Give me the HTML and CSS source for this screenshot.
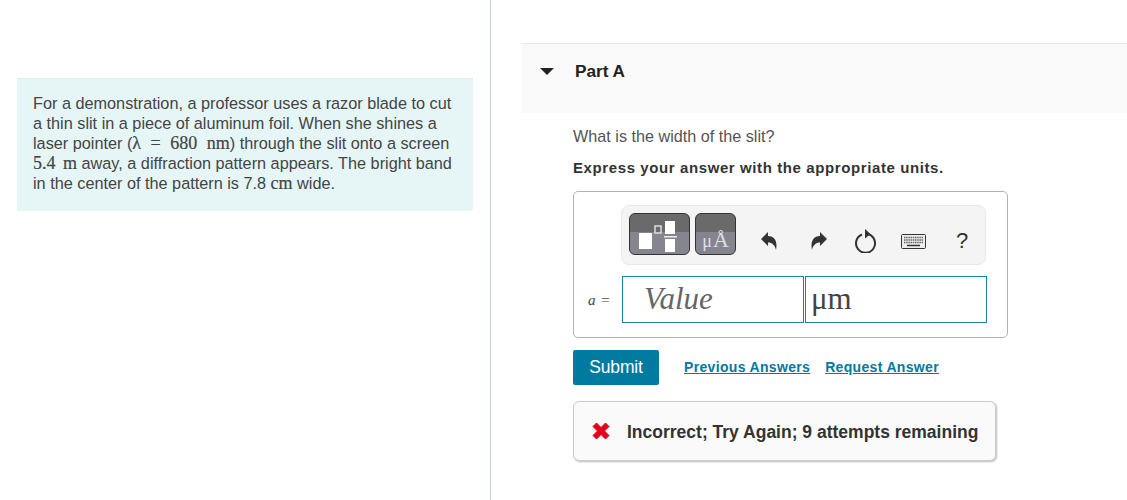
FILE: index.html
```html
<!DOCTYPE html>
<html lang="en">

<head>
    <meta charset="UTF-8">
    <title>Part A</title>
    <link rel="stylesheet" href="styles.css">
</head>

<body>
    <div class="page">
        <div class="left-col">
            <div class="intro">
                For a demonstration, a professor uses a razor blade to cut
                a thin slit in a piece of aluminum foil. When she shines a
                laser pointer (<span class="math math-wide">&lambda; = 680 nm</span>) through the slit onto a screen
                <span class="math">5.4 m</span> away, a diffraction pattern appears. The bright band
                in the center of the pattern is 7.8 <span class="math">cm</span> wide.
            </div>
        </div>

        <div class="right-col">
            <div class="part-head">
                <span class="caret"></span>
                <span class="part-title">Part A</span>
            </div>

            <div class="part-body">
                <p class="question">What is the width of the slit?</p>
                <p class="instruction">Express your answer with the appropriate units.</p>

                <div class="answer-box">
                    <div class="toolbar">
                        <div class="tool-btn tool-templates">
                            <svg width="59" height="40" viewBox="0 0 59 40">
                                <rect x="9" y="19" width="13" height="16" fill="#fff"/>
                                <rect x="25" y="12" width="6" height="7" fill="none" stroke="#ddd" stroke-width="1.5"/>
                                <rect x="35" y="7" width="10" height="13" fill="#fff"/>
                                <rect x="34" y="22" width="13" height="1.5" fill="#eee"/>
                                <rect x="35" y="25" width="10" height="13" fill="#fff"/>
                            </svg>
                        </div>
                        <div class="tool-btn tool-units"><span class="mu">&mu;</span><span class="angstrom">&Aring;</span></div>
                        <div class="tool-icons">
                            <svg class="icon-undo" width="18" height="18" viewBox="0 0 18 18"><path d="M1 7 8 0V4C13.500 4 18 8 16 18 15 13 12 10.500 8 10.500V14z" fill="#333"/></svg>
                            <svg class="icon-redo" width="18" height="18" viewBox="0 0 18 18"><path d="M17 7 10 0V4C4.500 4 0 8 2 18 3 13 6 10.500 10 10.500V14z" fill="#333"/></svg>
                            <svg class="icon-reload" width="22" height="24" viewBox="0 0 22 24"><path d="M7 5.500a9.500 9.500 0 1 0 6.500-.2" fill="none" stroke="#333" stroke-width="2"/><path d="M10 0v9.500L15.500 5z" fill="#333"/></svg>
                            <svg class="icon-keyboard" width="25" height="15" viewBox="0 0 25 15"><rect x="0.500" y="0.500" width="24" height="14" rx="1" fill="#eee" stroke="#333"/><path d="M3 3.500h19M3 6h19M3 8.500h19" stroke="#666" stroke-width="1.500" stroke-dasharray="1.500 .7"/><path d="M6 11.500h13" stroke="#333" stroke-width="1.500"/></svg>
                            <span class="help">?</span>
                        </div>
                    </div>

                    <div class="answer-row">
                        <span class="var-label"><i>a</i> =</span>
                        <div class="field field-value">Value</div>
                        <div class="field field-units">&mu;m</div>
                    </div>
                </div>

                <div class="actions">
                    <button class="submit">Submit</button>
                    <a href="#" class="link">Previous Answers</a>
                    <a href="#" class="link">Request Answer</a>
                </div>

                <div class="feedback">
                    <svg width="18" height="18" viewBox="0 0 18 18"><path d="M1 4.500 4.500 1 9 5.500 13.500 1 17 4.500 12.500 9 17 13.500 13.500 17 9 12.500 4.500 17 1 13.500 5.500 9z" fill="#e2001a" stroke="#e2001a" stroke-linejoin="round"/></svg>
                    <span>Incorrect; Try Again; 9 attempts remaining</span>
                </div>
            </div>
        </div>
    </div>
</body>

</html>
```

FILE: styles.css
```css
body {
    font-family: "Liberation Sans", Arial, sans-serif;
    margin: 0;
    padding: 0;
    background-color: #fff;
    color: #333;
}

.page {
    display: flex;
    height: 500px;
    overflow: hidden;
}

.left-col {
    width: 456px;
    flex-shrink: 0;
    padding: 78px 17px 0;
    border-right: 1px solid #c8d4e6;
}

.intro {
    padding: 14px 16px 17px;
    height: 101px;
    background-color: #e6f6f7;
    border-top: 1px solid #dfeaea;
    font-size: 16.25px;
    line-height: 20px;
    color: #444;
}

.math {
    font-family: "Liberation Serif", serif;
    font-size: 18px;
    line-height: 0;
    word-spacing: 3px;
    -webkit-text-stroke: 0.2px #444;
}

.math-wide {
    word-spacing: 5px;
}

.right-col {
    flex: 1;
    padding: 43px 0 0 31px;
}

.part-head {
    display: flex;
    align-items: flex-start;
    height: 69px;
    background-color: #f9f9f9;
    border-top: 1px solid #e8e8e8;
}

.caret {
    margin: 24px 0 0 18px;
    border-left: 7px solid transparent;
    border-right: 7px solid transparent;
    border-top: 7px solid #222;
}

.part-title {
    margin: 17px 0 0 21px;
    font-size: 17.2px;
    font-weight: bold;
    line-height: 20px;
    color: #222;
}

.part-body {
    padding-left: 51px;
}

.question {
    margin: 14px 0 0;
    font-size: 16.2px;
    line-height: 18px;
    color: #555;
}

.instruction {
    margin: 14px 0 0;
    font-size: 15px;
    font-weight: bold;
    line-height: 18px;
    letter-spacing: 0.6px;
    color: #333;
}

.answer-box {
    box-sizing: border-box;
    width: 435px;
    height: 147px;
    margin-top: 14px;
    padding: 13px 20px 0 13px;
    border: 1px solid #b3b3b3;
    border-radius: 5px;
}

.toolbar {
    box-sizing: border-box;
    display: flex;
    gap: 5px;
    width: 365px;
    height: 60px;
    margin-left: 34px;
    padding: 7px;
    background-color: #f4f4f4;
    border: 1px solid #e8e8e8;
    border-radius: 8px;
}

.tool-btn {
    box-sizing: border-box;
    height: 42px;
    background: linear-gradient(#6a6a6a 45%, #858590 45%);
    border: 1px solid #333;
    border-radius: 6px;
}

.tool-templates {
    width: 61px;
}

.tool-units {
    display: flex;
    align-items: flex-end;
    justify-content: center;
    width: 41px;
    padding-bottom: 2px;
    font-family: "Liberation Serif", serif;
    color: #e0e0e0;
}

.mu {
    font-size: 18px;
    line-height: 22px;
}

.angstrom {
    font-size: 22px;
    line-height: 24px;
    margin-left: 1px;
}

.tool-icons {
    display: flex;
    align-items: center;
    height: 28px;
    margin-top: 14px;
    padding-left: 19px;
}

.icon-redo {
    margin-left: 32px;
}

.icon-reload {
    margin-left: 27px;
}

.icon-keyboard {
    margin-left: 24px;
}

.help {
    margin-left: 30px;
    font-size: 22px;
    color: #333;
}

.answer-row {
    display: flex;
    align-items: center;
    gap: 1px;
    margin-top: 11px;
}

.var-label {
    width: 34px;
    padding-top: 1px;
    font-family: "Liberation Serif", serif;
    font-size: 15px;
    word-spacing: 2px;
    text-indent: 1px;
    color: #444;
}

.field {
    box-sizing: border-box;
    width: 182px;
    height: 47px;
    border: 1px solid #1c83a5;
    font-family: "Liberation Serif", serif;
    font-size: 31px;
    line-height: 43px;
    color: #444;
}

.field-value {
    padding-left: 21px;
    font-style: italic;
    color: #666;
}

.field-units {
    padding-left: 5px;
}

.actions {
    display: flex;
    align-items: center;
    margin-top: 12px;
}

.submit {
    width: 86px;
    height: 35px;
    padding: 0;
    background-color: #007a9e;
    border: none;
    border-radius: 2px;
    color: #fff;
    font-family: inherit;
    font-size: 17.5px;
    letter-spacing: -0.2px;
    cursor: pointer;
}

.link {
    margin: -2px 0 0 25px;
    font-size: 14px;
    font-weight: bold;
    color: #007a9e;
    letter-spacing: 0.33px;
}

.link + .link {
    margin-left: 15px;
}

.feedback {
    box-sizing: border-box;
    display: flex;
    align-items: center;
    width: 423px;
    height: 60px;
    margin-top: 16px;
    padding-left: 18px;
    background-color: #fafafa;
    border: 1px solid #ccc;
    border-radius: 6px;
    box-shadow: 1px 1px 2px #bbb;
    font-size: 17.5px;
    font-weight: bold;
    color: #333;
}

.feedback span {
    margin: 2px 0 0 17px;
}
```
